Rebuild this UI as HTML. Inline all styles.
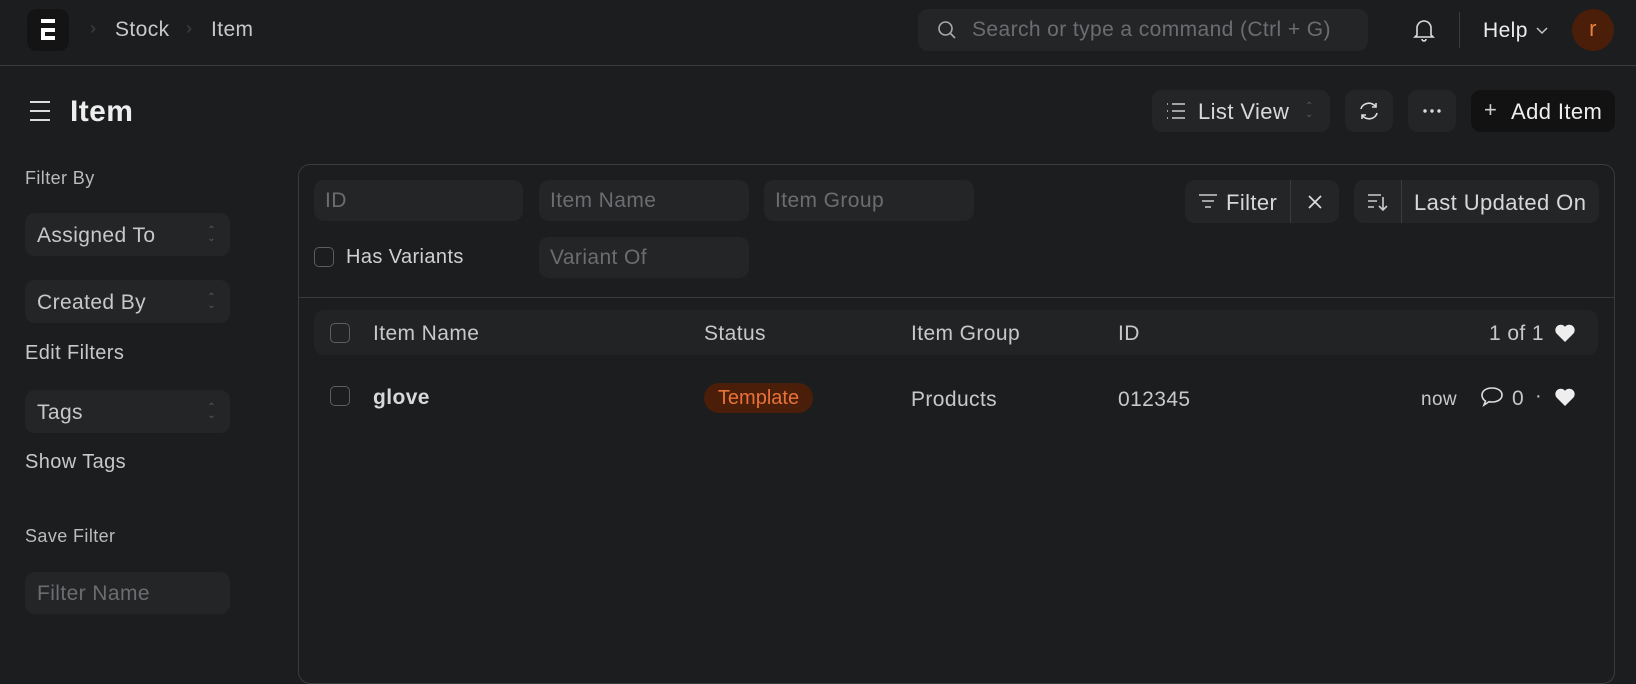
<!DOCTYPE html>
<html><head><style>
*{box-sizing:border-box;margin:0;padding:0}
body{width:1636px;height:645px;background:#1c1d1f;font-family:"Liberation Sans",sans-serif;color:#c8c8c8;position:relative;overflow:hidden;letter-spacing:0.4px}
.a{position:absolute}
.box{position:absolute;background:#242527;border-radius:10px}
.t{position:absolute;white-space:nowrap}
.ph{color:#6c6d70;font-size:21px}
.chev{position:absolute;right:14px;top:50%;transform:translateY(-50%);color:#5a5b5e;font-size:10px;line-height:8px}
.cb{position:absolute;width:20px;height:20px;border:1.5px solid #5c5d60;border-radius:5px}
.f{font-size:21px}
</style></head><body>
<div class="a" style="left:0;top:65px;width:1636px;height:1px;background:#3a3b3e"></div>
<div class="box" style="left:27px;top:9px;width:42px;height:42px;background:#141414"></div>
<div class="a" style="left:41px;top:19px;width:14px;height:4px;background:#fff"></div>
<div class="a" style="left:41px;top:28px;width:4px;height:12px;background:#fff"></div>
<div class="a" style="left:41px;top:28px;width:14px;height:4px;background:#fff"></div>
<div class="a" style="left:41px;top:36px;width:14px;height:4px;background:#fff"></div>
<div class="t" style="left:90px;top:18px;color:#3e4045;font-size:18px">›</div>
<div class="t f" style="left:115px;top:18px;color:#c8c8c8">Stock</div>
<div class="t" style="left:186px;top:18px;color:#3e4045;font-size:18px">›</div>
<div class="t f" style="left:211px;top:18px;color:#c8c8c8">Item</div>
<div class="box" style="left:918px;top:9px;width:450px;height:42px"></div>
<svg class="a" style="left:937px;top:20px" width="20" height="20" viewBox="0 0 20 20" fill="none" stroke="#aaa" stroke-width="1.6"><circle cx="8.5" cy="8.5" r="6.5"/><path d="M13.5 13.5l4.5 4.5"/></svg>
<div class="t ph" style="left:972px;top:18px">Search or type a command (Ctrl + G)</div>
<svg class="a" style="left:1413px;top:18px" width="22" height="24" viewBox="0 0 22 24" fill="none" stroke="#ddd" stroke-width="1.6"><path d="M4 17V10a7 7 0 0114 0v7l2 2H2z"/><path d="M9 21a2 2 0 004 0"/></svg>
<div class="a" style="left:1459px;top:12px;width:1px;height:36px;background:#3a3b3e"></div>
<div class="t f" style="left:1483px;top:19px;color:#eee">Help</div>
<svg class="a" style="left:1536px;top:27px" width="12" height="8" viewBox="0 0 12 8" fill="none" stroke="#ccc" stroke-width="1.4"><path d="M1 1l5 5 5-5"/></svg>
<div class="a" style="left:1572px;top:9px;width:42px;height:42px;border-radius:50%;background:#4a1e08;color:#e8813e;font-size:22px;text-align:center;line-height:40px">r</div>
<div class="a" style="left:30px;top:101px;width:20px;height:2px;background:#ddd"></div>
<div class="a" style="left:30px;top:110px;width:20px;height:2px;background:#ddd"></div>
<div class="a" style="left:30px;top:119px;width:20px;height:2px;background:#ddd"></div>
<div class="t" style="left:70px;top:95px;font-size:30px;font-weight:bold;color:#eee">Item</div>
<div class="box" style="left:1152px;top:90px;width:178px;height:42px"></div>
<svg class="a" style="left:1166px;top:102px" width="20" height="18" viewBox="0 0 20 18" fill="none" stroke="#ccc" stroke-width="1.6"><path d="M1 2h1M6 2h13M1 9h1M6 9h13M1 16h1M6 16h13"/></svg>
<div class="t" style="left:1198px;top:99px;font-size:22px;color:#d8d8d8">List View</div>
<div class="chev" style="left:1305px;top:111px;right:auto">⌃<br>⌄</div>
<div class="box" style="left:1345px;top:90px;width:48px;height:42px"></div>
<svg class="a" style="left:1357px;top:99px" width="24" height="24" viewBox="0 0 24 24" fill="none" stroke="#ddd" stroke-width="1.6"><path d="M4 10a8 7 0 0115-2M20 14a8 7 0 01-15 2"/><path d="M19 4v4h-4M5 20v-4h4"/></svg>
<div class="box" style="left:1408px;top:90px;width:48px;height:42px"></div>
<svg class="a" style="left:1422px;top:109px" width="20" height="4"><circle cx="3" cy="2" r="1.7" fill="#ddd"/><circle cx="10" cy="2" r="1.7" fill="#ddd"/><circle cx="17" cy="2" r="1.7" fill="#ddd"/></svg>
<div class="box" style="left:1471px;top:90px;width:144px;height:42px;background:#121212"></div>
<div class="t" style="left:1484px;top:97px;font-size:22px;color:#ccc">+</div>
<div class="t" style="left:1511px;top:99px;font-size:22px;color:#eee">Add Item</div>
<div class="t" style="left:25px;top:168px;font-size:18px;color:#bbb">Filter By</div>
<div class="box" style="left:25px;top:213px;width:205px;height:43px"><div class="t f" style="left:12px;top:11px;color:#c8c8c8">Assigned To</div><div class="chev">⌃<br>⌄</div></div>
<div class="box" style="left:25px;top:280px;width:205px;height:43px"><div class="t f" style="left:12px;top:11px;color:#c8c8c8">Created By</div><div class="chev">⌃<br>⌄</div></div>
<div class="t" style="left:25px;top:342px;font-size:20px;color:#c8c8c8">Edit Filters</div>
<div class="box" style="left:25px;top:390px;width:205px;height:43px"><div class="t f" style="left:12px;top:11px;color:#c8c8c8">Tags</div><div class="chev">⌃<br>⌄</div></div>
<div class="t" style="left:25px;top:451px;font-size:20px;color:#c8c8c8">Show Tags</div>
<div class="t" style="left:25px;top:526px;font-size:18px;color:#bbb">Save Filter</div>
<div class="box" style="left:25px;top:572px;width:205px;height:42px"><div class="t ph" style="left:12px;top:10px">Filter Name</div></div>
<div class="a" style="left:298px;top:164px;width:1317px;height:520px;border:1px solid #3a3b3e;border-radius:12px"></div>
<div class="box" style="left:314px;top:180px;width:209px;height:41px"><div class="t ph" style="left:11px;top:9px">ID</div></div>
<div class="box" style="left:539px;top:180px;width:210px;height:41px"><div class="t ph" style="left:11px;top:9px">Item Name</div></div>
<div class="box" style="left:764px;top:180px;width:210px;height:41px"><div class="t ph" style="left:11px;top:9px">Item Group</div></div>
<div class="cb" style="left:314px;top:247px"></div>
<div class="t" style="left:346px;top:246px;font-size:20px;color:#d0d0d0">Has Variants</div>
<div class="box" style="left:539px;top:237px;width:210px;height:41px"><div class="t ph" style="left:11px;top:9px">Variant Of</div></div>
<div class="box" style="left:1185px;top:180px;width:154px;height:43px"></div>
<svg class="a" style="left:1198px;top:193px" width="20" height="16" viewBox="0 0 20 16" fill="none" stroke="#ccc" stroke-width="1.6"><path d="M1 2h18M4 8h12M7 14h6"/></svg>
<div class="t" style="left:1226px;top:190px;font-size:22px;color:#d8d8d8">Filter</div>
<div class="a" style="left:1290px;top:180px;width:1px;height:43px;background:#3a3b3e"></div>
<svg class="a" style="left:1307px;top:194px" width="16" height="16" viewBox="0 0 16 16" stroke="#ddd" stroke-width="1.7"><path d="M2 2l12 12M14 2L2 14"/></svg>
<div class="box" style="left:1354px;top:180px;width:245px;height:43px"></div>
<svg class="a" style="left:1367px;top:192px" width="22" height="20" viewBox="0 0 22 20" fill="none" stroke="#ccc" stroke-width="1.6"><path d="M1 3h13M1 9h9M1 15h6M16 5v13M12 14l4 4 4-4"/></svg>
<div class="a" style="left:1401px;top:180px;width:1px;height:43px;background:#3a3b3e"></div>
<div class="t" style="left:1414px;top:190px;font-size:22px;color:#d8d8d8">Last Updated On</div>
<div class="a" style="left:299px;top:297px;width:1315px;height:1px;background:#3a3b3e"></div>
<div class="box" style="left:314px;top:310px;width:1284px;height:45px;background:#222325"></div>
<div class="cb" style="left:330px;top:323px"></div>
<div class="t f" style="left:373px;top:322px;color:#c8c8c8">Item Name</div>
<div class="t f" style="left:704px;top:322px;color:#c8c8c8">Status</div>
<div class="t f" style="left:911px;top:322px;color:#c8c8c8">Item Group</div>
<div class="t f" style="left:1118px;top:322px;color:#c8c8c8">ID</div>
<div class="t f" style="left:1489px;top:322px;color:#c8c8c8">1 of 1</div>
<svg class="a" style="left:1554px;top:323px" width="22" height="20" viewBox="0 0 22 20"><path d="M11 19L2.5 10.5A5.3 5.3 0 0111 3.8a5.3 5.3 0 018.5 6.7z" fill="#eee"/></svg>
<div class="cb" style="left:330px;top:386px"></div>
<div class="t" style="left:373px;top:386px;font-size:21px;font-weight:bold;color:#d8d8d8">glove</div>
<div class="a" style="left:704px;top:383px;width:109px;height:30px;border-radius:15px;background:#4a1e08;color:#e8733a;font-size:20px;text-align:center;line-height:30px;letter-spacing:0">Template</div>
<div class="t f" style="left:911px;top:388px;color:#c8c8c8">Products</div>
<div class="t f" style="left:1118px;top:388px;color:#c8c8c8">012345</div>
<div class="t" style="left:1421px;top:389px;font-size:19px;color:#c8c8c8">now</div>
<svg class="a" style="left:1480px;top:386px" width="24" height="22" viewBox="0 0 24 22" fill="none" stroke="#ddd" stroke-width="1.6"><path d="M12 2c6 0 10 3 10 7s-4 7-10 7c-1 0-2 0-3-.3L4 19l1.5-4C3 13.5 2 11.5 2 9c0-4 4-7 10-7z"/></svg>
<div class="t f" style="left:1512px;top:387px;color:#c8c8c8">0</div>
<div class="t" style="left:1535px;top:385px;font-size:20px;color:#c8c8c8">·</div>
<svg class="a" style="left:1554px;top:387px" width="22" height="20" viewBox="0 0 22 20"><path d="M11 19L2.5 10.5A5.3 5.3 0 0111 3.8a5.3 5.3 0 018.5 6.7z" fill="#eee"/></svg>
</body></html>
